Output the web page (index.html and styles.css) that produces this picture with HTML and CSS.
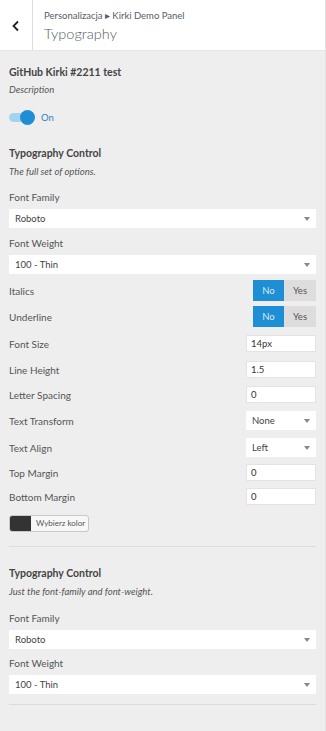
FILE: index.html
```html
<!DOCTYPE html>
<html>
<head>
<meta charset="utf-8">
<link rel="stylesheet" href="styles.css">
</head>
<body>
<div class="panel">
  <header class="head">
    <div class="back">
      <svg width="10" height="12" viewBox="0 0 10 12"><path d="M7 1.5 L2.5 6 L7 10.5" fill="none" stroke="#222" stroke-width="1.8"/></svg>
    </div>
    <div class="titles">
      <div class="crumb">Personalizacja ▸ Kirki Demo Panel</div>
      <div class="title">Typography</div>
    </div>
  </header>
  <main class="content">
    <div class="ctl-title t1">GitHub Kirki #2211 test</div>
    <div class="ctl-desc d1">Description</div>
    <div class="toggle-row">
      <span class="toggle"><span class="knob"></span></span>
      <span class="toggle-label">On</span>
    </div>

    <div class="ctl-title t2">Typography Control</div>
    <div class="ctl-desc d2">The full set of options.</div>

    <div class="label l-ff">Font Family</div>
    <div class="select full s-ff"><span>Roboto</span><i class="arrow"></i></div>
    <div class="label l-fw">Font Weight</div>
    <div class="select full s-fw"><span>100 - Thin</span><i class="arrow"></i></div>

    <div class="row r-it"><span class="label">Italics</span>
      <div class="btns"><span class="on">No</span><span class="off">Yes</span></div></div>
    <div class="row r-ul"><span class="label">Underline</span>
      <div class="btns"><span class="on">No</span><span class="off">Yes</span></div></div>
    <div class="row r-in r-fs"><span class="label">Font Size</span><div class="input">14px</div></div>
    <div class="row r-in r-lh"><span class="label">Line Height</span><div class="input">1.5</div></div>
    <div class="row r-in"><span class="label">Letter Spacing</span><div class="input">0</div></div>
    <div class="row r-sel"><span class="label">Text Transform</span><div class="select small"><span>None</span><i class="arrow"></i></div></div>
    <div class="row r-sel"><span class="label">Text Align</span><div class="select small"><span>Left</span><i class="arrow"></i></div></div>
    <div class="row r-in r-tm"><span class="label">Top Margin</span><div class="input">0</div></div>
    <div class="row r-in r-bm"><span class="label">Bottom Margin</span><div class="input">0</div></div>

    <div class="color-btn"><span class="swatch"></span><span class="color-text">Wybierz kolor</span></div>
    <div class="sep s1"></div>

    <div class="ctl-title t3">Typography Control</div>
    <div class="ctl-desc d2">Just the font-family and font-weight.</div>
    <div class="label l-ff2">Font Family</div>
    <div class="select full s-ff"><span>Roboto</span><i class="arrow"></i></div>
    <div class="label l-fw2">Font Weight</div>
    <div class="select full s-fw"><span>100 - Thin</span><i class="arrow"></i></div>
    <div class="sep s2"></div>
  </main>
</div>
</body>
</html>
```
FILE: styles.css
```css
html, body {
  margin: 0;
  padding: 0;
  background: #eeeeee;
  font-family: Lato, "Open Sans", sans-serif;
  color: #555;
}
.panel {
  width: 325px;
  min-height: 731px;
  border-right: 1px solid #e2e2e2;
  background: #eeeeee;
}
.head {
  display: flex;
  height: 51px;
  background: #fff;
  border-bottom: 1px solid #e6e6e6;
  box-sizing: border-box;
}
.back {
  width: 33px;
  border-right: 1px solid #dddddd;
  display: flex;
  align-items: center;
  justify-content: center;
  padding-top: 2px;
  box-sizing: border-box;
}
.titles {
  padding-left: 11px;
  padding-top: 9px;
}
.crumb {
  font-size: 9.5px;
  line-height: 13px;
  color: #555d66;
}
.title {
  font-size: 14.5px;
  font-weight: 300;
  line-height: 20px;
  margin-top: 2px;
  color: #555d66;
}
.content {
  padding: 0 9px;
}
.ctl-title {
  font-size: 10.5px;
  font-weight: 700;
  line-height: 14px;
  color: #444;
}
.t1 { margin-top: 14px; }
.t2 { margin-top: 22px; }
.t3 { margin-top: 19px; }
.ctl-desc {
  font-size: 9.5px;
  font-style: italic;
  line-height: 14px;
  color: #555;
}
.d1 { margin-top: 4px; }
.d2 { margin-top: 5px; }
.toggle-row {
  display: flex;
  align-items: center;
  height: 14px;
  margin-top: 13px;
}
.toggle {
  position: relative;
  width: 21px;
  height: 9px;
  border-radius: 5px;
  background: #a7d2ef;
}
.knob {
  position: absolute;
  right: -5px;
  top: -3px;
  width: 15px;
  height: 15px;
  border-radius: 50%;
  background: #1f8fd5;
}
.toggle-label {
  margin-left: 11px;
  font-size: 9.5px;
  color: #2d84bd;
}
.label {
  font-size: 10px;
  line-height: 14px;
  color: #555;
}
.l-ff { margin-top: 11px; }
.l-ff2 { margin-top: 12px; }
.l-fw { margin-top: 8px; }
.l-fw2 { margin-top: 7px; }
.select {
  display: flex;
  align-items: center;
  justify-content: space-between;
  background: #fff;
  box-sizing: border-box;
  font-size: 9.5px;
  color: #444;
}
.select.full {
  height: 19px;
  padding: 0 6px 0 6px;
  margin-top: 5px;
}
.s-fw { margin-top: 5px; }
.arrow {
  width: 0;
  height: 0;
  border-left: 3px solid transparent;
  border-right: 3px solid transparent;
  border-top: 4px solid #888;
  margin-right: 0;
}
.row {
  display: flex;
  align-items: center;
  justify-content: space-between;
}
.r-it { margin-top: 6px; }
.r-ul { margin-top: 5px; }
.btns {
  display: flex;
  height: 21px;
  font-size: 9.5px;
}
.btns span {
  display: flex;
  align-items: center;
  justify-content: center;
}
.btns .on {
  width: 31px;
  background: #1f8fd5;
  color: #d6ebf8;
}
.btns .off {
  width: 32px;
  background: #dddddd;
  color: #555;
}
.input {
  width: 70px;
  height: 17px;
  box-sizing: border-box;
  background: #fff;
  border: 1px solid #e3e3e3;
  font-size: 9.5px;
  line-height: 15px;
  padding-left: 4px;
  color: #333;
}
.r-in { margin-top: 8px; }
.r-fs { margin-top: 8px; }
.r-lh { margin-top: 9px; }
.r-tm { margin-top: 7px; }
.r-bm { margin-top: 7px; }
.r-sel { margin-top: 8px; }
.select.small {
  width: 70px;
  height: 19px;
  padding: 0 6px 0 6px;
}
.color-btn {
  display: flex;
  align-items: stretch;
  width: 80px;
  height: 17px;
  margin-top: 10px;
  box-sizing: border-box;
  border: 1px solid #c8c8c8;
  border-radius: 3px;
  background: #f7f7f7;
  overflow: hidden;
}
.swatch {
  width: 21px;
  flex: none;
  background: #333333;
}
.color-text {
  font-size: 8px;
  line-height: 15px;
  padding-left: 5px;
  white-space: nowrap;
  color: #555;
}
.sep {
  height: 1px;
  background: #dcdcdc;
}
.s1 { margin-top: 14px; }
.s2 { margin-top: 10px; }
```
